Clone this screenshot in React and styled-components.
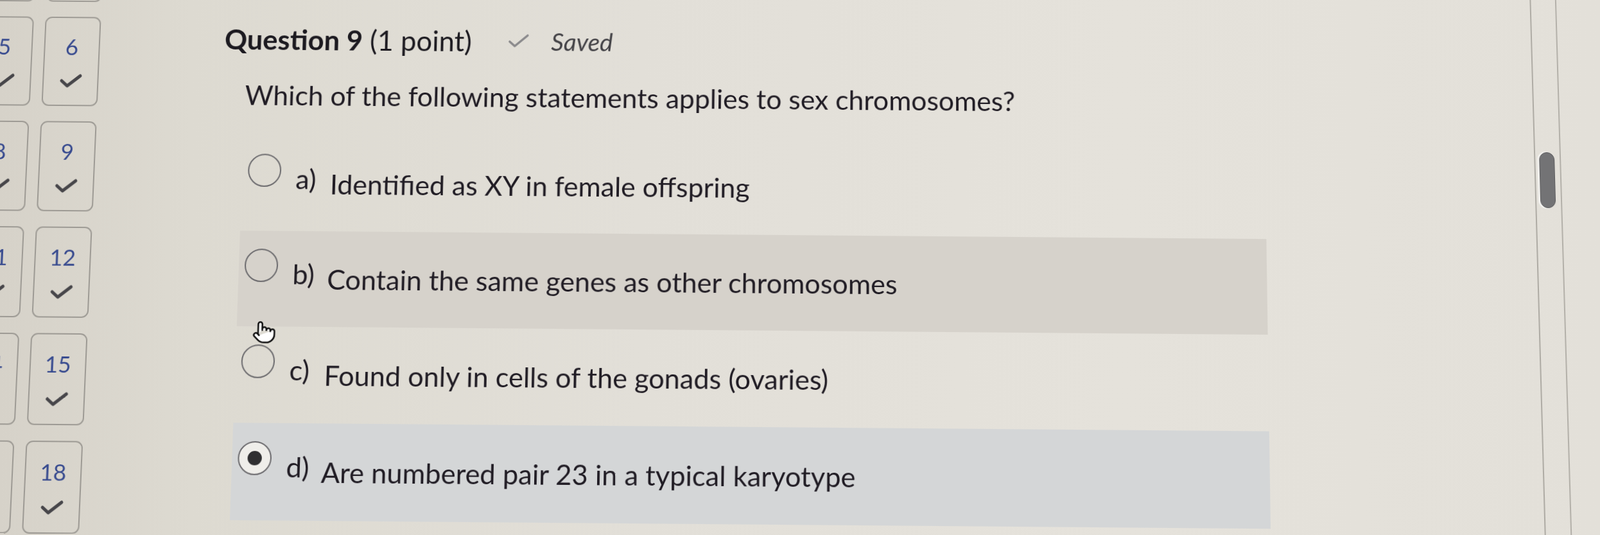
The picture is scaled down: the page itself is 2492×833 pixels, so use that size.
import React from 'react';
import styled, { createGlobalStyle } from 'styled-components';
import { Pointer } from 'lucide-react';

const GlobalStyle = createGlobalStyle`
  html, body {
    margin: 0;
    padding: 0;
    overflow: hidden;
  }
  body {
    height: 833px;
    background: linear-gradient(90deg, #d6d2c9 0%, #dddad1 12%, #e2dfd8 40%, #e5e2db 70%, #e3e0d9 100%);
    font-family: Lato, "Open Sans", sans-serif;
  }
`;

/* the reference is a phone photo of the screen: a slight keystone and tilt */
const Page = styled.div`
  display: flex;
  width: 2560px;
  height: 873px;
  margin-top: -40px;
  position: relative;
  transform-origin: 1244px 456px;
  transform: perspective(2000px) rotateX(3.6deg) rotate(0.47deg);
`;

const Sidebar = styled.nav`
  flex: 0 0 337px;
`;

const NavGrid = styled.div`
  display: grid;
  grid-template-columns: 88px 88px;
  grid-auto-rows: 142px;
  gap: 24px 18px;
  margin-left: -53px;
  margin-top: -96px;
`;

const NavBox = styled.div`
  border: 2px solid #9d9a94;
  border-radius: 11px;
  display: flex;
  flex-direction: column;
  align-items: center;
  padding-top: 25px;
  box-sizing: border-box;
`;

const NavNum = styled.span`
  font-size: 35px;
  line-height: 40px;
  color: #384b8f;
`;

const NavCheck = styled.svg`
  margin-top: 21px;
  width: 40px;
  height: 26px;
`;

const Main = styled.main`
  flex: 0 0 2057px;
  padding-top: 77px;
`;

const Header = styled.div`
  display: flex;
  align-items: center;
  height: 52px;
`;

const Title = styled.h2`
  margin: 0;
  font-size: 44px;
  line-height: 52px;
  font-weight: 400;
  color: #1c1a20;
  white-space: nowrap;

  strong {
    font-weight: 700;
  }
`;

const SavedCheck = styled.svg`
  margin-left: 56px;
  width: 36px;
  height: 26px;
`;

const Saved = styled.span`
  margin-left: 33px;
  font-size: 39px;
  font-style: italic;
  color: #444347;
`;

const Prompt = styled.p`
  margin: 37px 0 0 35px;
  font-size: 43px;
  line-height: 52px;
  color: #201c24;
`;

const Options = styled.div`
  margin: 39px 0 0 35px;
  width: 1601px;
  display: flex;
  flex-direction: column;
`;

const Option = styled.label`
  display: flex;
  align-items: flex-start;
  height: 149px;
  box-sizing: border-box;
  padding: 28px 0 0 9px;
  background: ${p => p.$tone === 'hover' ? '#d6d2cb' : p.$tone === 'selected' ? '#d4d6d7' : 'transparent'};
`;

const Radio = styled.span`
  flex: 0 0 auto;
  width: 52px;
  height: 52px;
  border-radius: 50%;
  border: 2.5px solid #6c6b6e;
  box-sizing: border-box;
  display: flex;
  align-items: center;
  justify-content: center;
  background: ${p => p.$checked ? '#efeeea' : 'transparent'};

  &::after {
    content: '';
    display: ${p => p.$checked ? 'block' : 'none'};
    width: 22px;
    height: 22px;
    border-radius: 50%;
    background: #2f2f31;
  }
`;

const Letter = styled.span`
  flex: 0 0 54px;
  margin: 21px 0 0 23px;
  font-size: 43px;
  line-height: 36px;
  color: #201c24;
`;

const Text = styled.span`
  margin-top: 21px;
  font-size: 43px;
  line-height: 52px;
  color: #201c24;
  white-space: nowrap;
`;

const Gutter = styled.div`
  flex: 0 0 32px;
  border-left: 2px solid #aeaba4;
  border-right: 2px solid #b3b0a9;
  padding-left: 6px;
`;

const Thumb = styled.div`
  margin-top: 266px;
  width: 24px;
  height: 88px;
  box-sizing: border-box;
  border-radius: 12px;
  background: #737375;
  border: 1px solid #5c5c5e;
  box-shadow: -2px 0 0 1px rgba(255, 255, 255, 0.55);
`;

const Edge = styled.div`
  flex: 1;
`;

const Cursor = styled.div`
  position: absolute;
  left: 396px;
  top: 545px;
  line-height: 0;
`;

const navRows = [[2, 3], [5, 6], [8, 9], [11, 12], [14, 15], [17, 18]];

const options = [
  { key: 'a', text: 'Identified as XY in female offspring' },
  { key: 'b', text: 'Contain the same genes as other chromosomes', tone: 'hover' },
  { key: 'c', text: 'Found only in cells of the gonads (ovaries)' },
  { key: 'd', text: 'Are numbered pair 23 in a typical karyotype', tone: 'selected', checked: true },
];

const Check = () => (
  <NavCheck viewBox="0 0 40 26">
    <polyline points="6,14 15,22 35,6" fill="none" stroke="#47464a" strokeWidth="5" strokeLinecap="round" strokeLinejoin="round" />
  </NavCheck>
);

const App = () => {
  return (
    <Page>
      <GlobalStyle />
      <Sidebar>
        <NavGrid>
          {navRows.flat().map(n => (
            <NavBox key={n}>
              <NavNum>{n}</NavNum>
              <Check />
            </NavBox>
          ))}
        </NavGrid>
      </Sidebar>
      <Main>
        <Header>
          <Title><strong>Question 9</strong> (1 point)</Title>
          <SavedCheck viewBox="0 0 36 26">
            <polyline points="4,14 12,21 32,4" fill="none" stroke="#8b8a8c" strokeWidth="3.6" strokeLinecap="round" strokeLinejoin="round" />
          </SavedCheck>
          <Saved>Saved</Saved>
        </Header>
        <Prompt>Which of the following statements applies to sex chromosomes?</Prompt>
        <Options>
          {options.map(o => (
            <Option key={o.key} $tone={o.tone}>
              <Radio $checked={o.checked} />
              <Letter>{o.key})</Letter>
              <Text>{o.text}</Text>
            </Option>
          ))}
        </Options>
      </Main>
      <Gutter>
        <Thumb />
      </Gutter>
      <Edge />
      <Cursor>
        <Pointer size={38} fill="#ffffff" color="#111111" strokeWidth={1.6} />
      </Cursor>
    </Page>
  );
};

export default App;
